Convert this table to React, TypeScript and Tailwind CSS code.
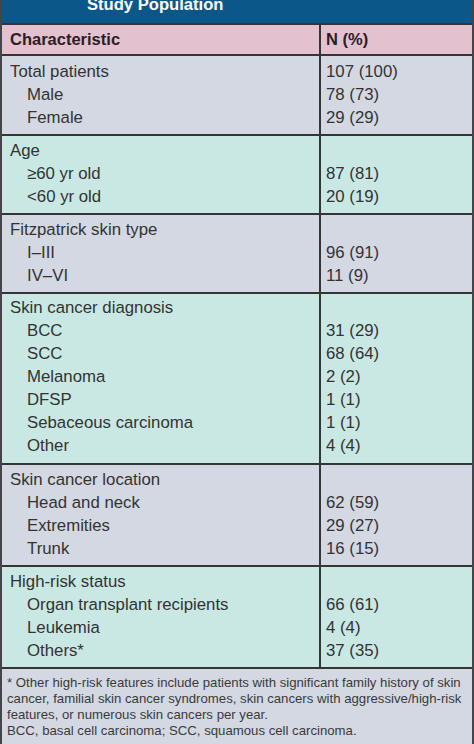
type Row = { label: string; value?: string; sub?: boolean };
type Group = { bg: string; pad: string; rows: Row[] };

const groups: Group[] = [
  {
    bg: 'bg-[#d3d8e2]',
    pad: 'pt-[4px] pb-[5px]',
    rows: [
      { label: 'Total patients', value: '107 (100)' },
      { label: 'Male', value: '78 (73)', sub: true },
      { label: 'Female', value: '29 (29)', sub: true },
    ],
  },
  {
    bg: 'bg-[#c9e8e4]',
    pad: 'pt-[3px] pb-[5px]',
    rows: [
      { label: 'Age' },
      { label: '≥60 yr old', value: '87 (81)', sub: true },
      { label: '<60 yr old', value: '20 (19)', sub: true },
    ],
  },
  {
    bg: 'bg-[#d3d8e2]',
    pad: 'pt-[3px] pb-[5px]',
    rows: [
      { label: 'Fitzpatrick skin type' },
      { label: 'I–III', value: '96 (91)', sub: true },
      { label: 'IV–VI', value: '11 (9)', sub: true },
    ],
  },
  {
    bg: 'bg-[#c9e8e4]',
    pad: 'pt-[2px] pb-[6px]',
    rows: [
      { label: 'Skin cancer diagnosis' },
      { label: 'BCC', value: '31 (29)', sub: true },
      { label: 'SCC', value: '68 (64)', sub: true },
      { label: 'Melanoma', value: '2 (2)', sub: true },
      { label: 'DFSP', value: '1 (1)', sub: true },
      { label: 'Sebaceous carcinoma', value: '1 (1)', sub: true },
      { label: 'Other', value: '4 (4)', sub: true },
    ],
  },
  {
    bg: 'bg-[#d3d8e2]',
    pad: 'pt-[3px] pb-[5px]',
    rows: [
      { label: 'Skin cancer location' },
      { label: 'Head and neck', value: '62 (59)', sub: true },
      { label: 'Extremities', value: '29 (27)', sub: true },
      { label: 'Trunk', value: '16 (15)', sub: true },
    ],
  },
  {
    bg: 'bg-[#c9e8e4]',
    pad: 'pt-[3px] pb-[5px]',
    rows: [
      { label: 'High-risk status' },
      { label: 'Organ transplant recipients', value: '66 (61)', sub: true },
      { label: 'Leukemia', value: '4 (4)', sub: true },
      { label: 'Others*', value: '37 (35)', sub: true },
    ],
  },
];

export default function App() {
  return (
    <div
      className="w-[474px] h-[744px] overflow-hidden flex flex-col border-x-2 border-[#44444a] text-[#333] bg-[#d3d8e2]"
      style={{ fontFamily: '"Liberation Sans", Arial, sans-serif' }}
    >
      {/* Title, cut off at the top as in the source */}
      <div className="h-[23px] shrink-0 bg-[#0b578a] overflow-hidden">
        <div className="-mt-[3px] pl-[85px] leading-[16px] text-[16.6px] font-bold text-white whitespace-nowrap">
          Study Population
        </div>
      </div>

      {/* Header */}
      <div className="flex shrink-0 h-[31px] border-t-2 border-[#353535] bg-[#e3c1ce] text-[#2a2026] text-[16.5px] font-bold leading-[29px]">
        <div className="w-[317px] pl-[8px]">Characteristic</div>
        <div className="flex-1 border-l-2 border-[#353535] pl-[5px]">N (%)</div>
      </div>

      {groups.map((g, i) => (
        <GroupBlock key={i} group={g} />
      ))}

      {/* Footnote */}
      <div className="flex-1 border-t-2 border-[#353535] bg-[#d3d8e2] pt-[6px] pl-[5px] text-[13.2px] leading-[16px] text-[#3a3a3a] whitespace-nowrap">
        * Other high-risk features include patients with significant family history of skin
        <br />
        cancer, familial skin cancer syndromes, skin cancers with aggressive/high-risk
        <br />
        features, or numerous skin cancers per year.
        <br />
        BCC, basal cell carcinoma; SCC, squamous cell carcinoma.
      </div>
    </div>
  );
}

function GroupBlock({ group }: { group: Group }) {
  return (
    <div className={`flex shrink-0 border-t-2 border-[#353535] text-[16.8px] leading-[23px] ${group.bg}`}>
      <div className={`w-[317px] pl-[8px] ${group.pad}`}>
        {group.rows.map((r, i) => (
          <div key={i} className={`h-[23px] whitespace-nowrap ${r.sub ? 'pl-[17px]' : ''}`}>
            {r.label}
          </div>
        ))}
      </div>
      <div className={`flex-1 border-l-2 border-[#353535] pl-[5px] ${group.pad}`}>
        {group.rows.map((r, i) => (
          <div key={i} className="h-[23px] whitespace-nowrap">
            {r.value ?? ''}
          </div>
        ))}
      </div>
    </div>
  );
}
